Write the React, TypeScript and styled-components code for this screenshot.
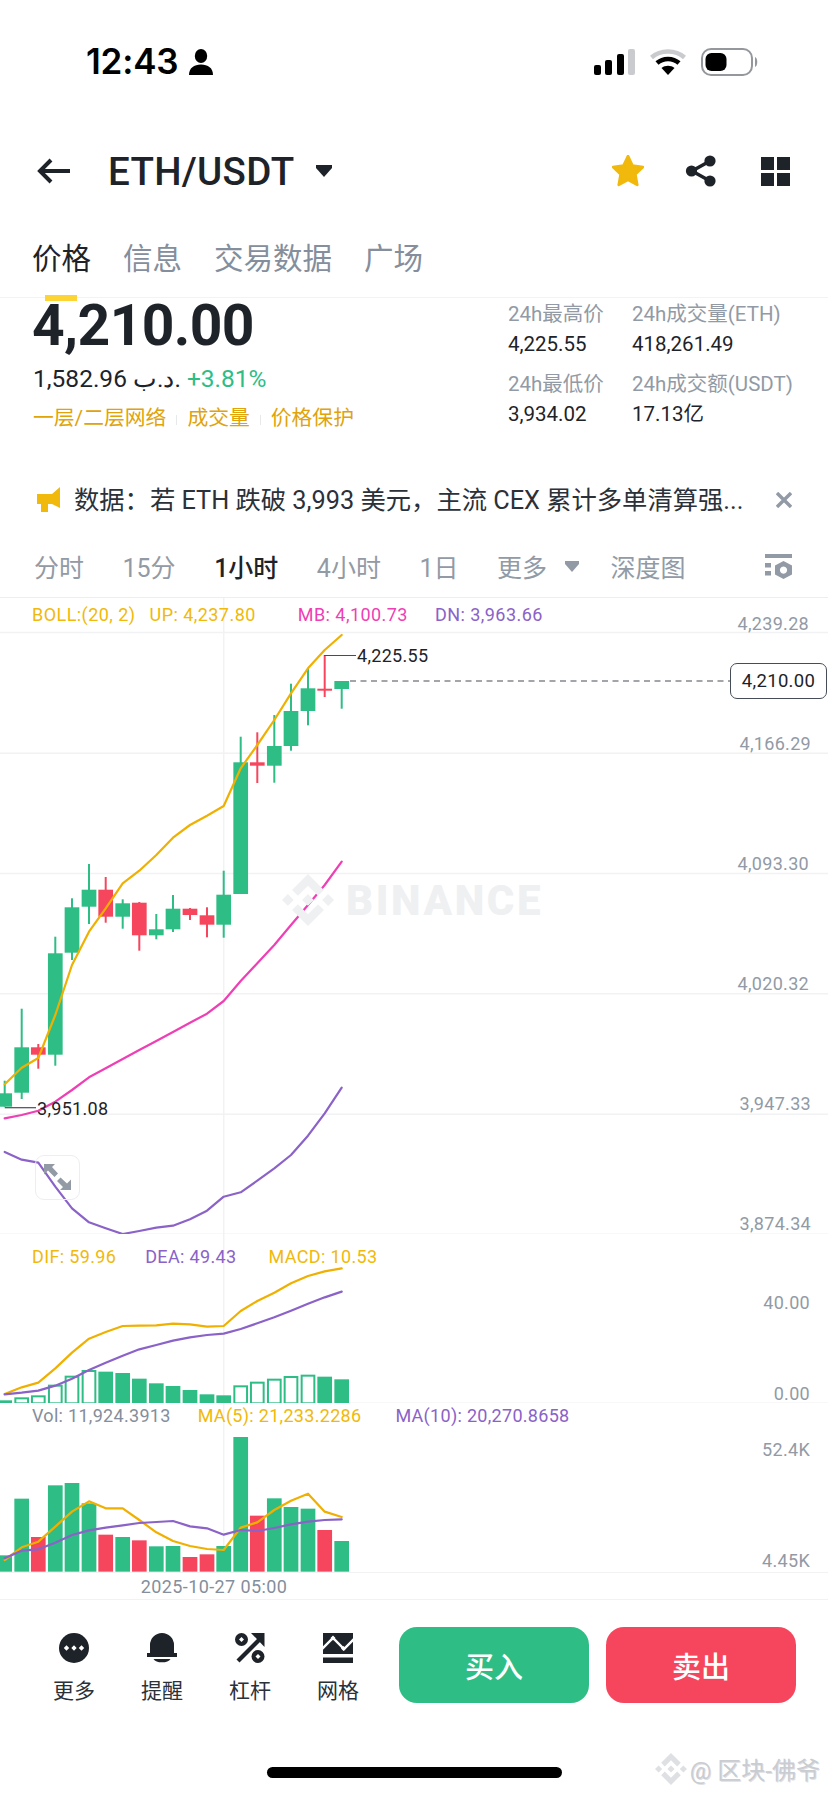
import React from 'react'
import styled, { createGlobalStyle } from 'styled-components'

const DARK = '#1e2329'
const GREY = '#929aa5'
const GREEN = '#2ebd85'
const RED = '#f6465d'
const YELLOW = '#f0b90b'
const PINK = '#ee3fb4'
const PURPLE = '#8a62c8'
const GRID = '#f1f2f4'
const FONT = `Roboto, "Noto Sans CJK SC", sans-serif`

const GlobalStyle = createGlobalStyle`
  html, body { margin: 0; padding: 0; background: #fff; }
  body { font-family: ${FONT}; color: ${DARK}; }
  * { box-sizing: border-box; }
`

const Page = styled.div`
  position: relative;
  width: 828px;
  height: 1796px;
  overflow: hidden;
  background: #fff;
`

/* status bar */
const StatusBar = styled.div`
  height: 120px;
  padding: 48px 69px 0 86px;
  display: flex;
  justify-content: space-between;
  align-items: flex-start;
`
const StatusLeft = styled.div`
  display: flex;
  align-items: center;
  gap: 11px;
`
const Time = styled.span`
  font-family: Inter, sans-serif;
  font-size: 35px;
  line-height: 27px;
  font-weight: 600;
  color: #000;
  letter-spacing: -0.2px;
`
const StatusRight = styled.div`
  display: flex;
  align-items: center;
  gap: 15px;
`

/* nav */
const NavBar = styled.div`
  height: 102px;
  padding: 0 38px 0 37px;
  display: flex;
  align-items: center;
`
const PairName = styled.span`
  margin-left: 38px;
  font-size: 38.5px;
  font-weight: 500;
  letter-spacing: 0.3px;
  color: ${DARK};
`
const PairCaret = styled.svg`
  margin-left: 20px;
  width: 18px;
  height: 14px;
`
const NavIcons = styled.div`
  margin-left: auto;
  display: flex;
  align-items: center;
  gap: 41px;
`
const GridIcon = styled.svg`
  margin-left: 3px;
  width: 29px;
  height: 29px;
`

/* tabs */
const Tabs = styled.div`
  height: 76px;
  padding: 18px 0 0 32px;
  display: flex;
  gap: 32px;
  border-bottom: 1px solid #f2f3f5;
`
const Tab = styled.div<{ $active?: boolean }>`
  position: relative;
  font-size: 29.5px;
  line-height: 38px;
  color: ${p => (p.$active ? DARK : '#848e9c')};
  ${p =>
    p.$active &&
    `&::after {
      content: '';
      position: absolute;
      left: 13px;
      top: 55px;
      width: 32px;
      height: 6px;
      background: #fcd535;
    }`}
`

/* price */
const PriceSection = styled.div`
  height: 164px;
  display: flex;
`
const PriceLeft = styled.div`
  width: 508px;
  padding-left: 33px;
`
const BigPrice = styled.div`
  font-size: 57px;
  line-height: 60px;
  font-weight: 700;
  margin-top: -2px;
  margin-left: -1px;
  color: ${DARK};
  letter-spacing: -0.6px;
`
const SubPrice = styled.div`
  margin-top: 8px;
  font-size: 24.5px;
  line-height: 30px;
  display: flex;
  gap: 6px;
  color: ${DARK};
`
const Percent = styled.span`
  color: ${GREEN};
`
const TagRow = styled.div`
  margin-top: 10px;
  display: flex;
  align-items: center;
  font-size: 20.8px;
  line-height: 28px;
  color: #e0a30a;
`
const TagDivider = styled.span`
  width: 1px;
  height: 10px;
  margin: 4px 10px 0;
  background: #e6e8ea;
`
const Stats = styled.div`
  display: grid;
  grid-template-columns: 124px auto;
  align-content: start;
  padding-top: 1px;
`
const StatCell = styled.div`
  height: 70px;
`
const StatLabel = styled.div`
  font-size: 20.5px;
  line-height: 30px;
  color: ${GREY};
`
const StatValue = styled.div`
  font-size: 20.5px;
  line-height: 30px;
  color: ${DARK};
`

/* notice */
const Notice = styled.div`
  height: 75px;
  padding: 0 36px 0 37px;
  display: flex;
  align-items: center;
`
const NoticeText = styled.span`
  margin: -3px 0 0 14px;
  font-size: 25.3px;
  white-space: nowrap;
  color: #2b3139;
`
const NoticeClose = styled.svg`
  margin-left: auto;
  width: 16px;
  height: 16px;
`

/* period row */
const PeriodRow = styled.div`
  height: 61px;
  padding: 0 35px 2px 34px;
  display: flex;
  align-items: center;
  gap: 38.5px;
  border-bottom: 1px solid #eceef0;
`
const Period = styled.span<{ $active?: boolean; $hasCaret?: boolean }>`
  font-size: 25px;
  color: ${p => (p.$active ? DARK : GREY)};
  font-weight: ${p => (p.$active ? 500 : 400)};
  display: flex;
  align-items: center;
  gap: 18px;
  margin-right: ${p => (p.$hasCaret ? -7 : 0)}px;
`
const FilterIcon = styled.svg`
  margin-left: auto;
  width: 28px;
  height: 25px;
`

/* chart */
const ChartPanel = styled.div<{ $height: number }>`
  position: relative;
  height: ${p => p.$height}px;
`
const ChartCanvas = styled.svg`
  position: absolute;
  left: 0;
  top: 0;
  width: 828px;
  height: 100%;
`
const LegendRow = styled.div<{ $top: number; $spacing: number }>`
  position: relative;
  padding: ${p => p.$top}px 0 0 32px;
  display: flex;
  font-size: 18px;
  line-height: 22px;
  letter-spacing: ${p => p.$spacing}px;
  white-space: nowrap;
`
const LegendItem = styled.span<{ $color: string; $gap?: number }>`
  color: ${p => p.$color};
  margin-left: ${p => p.$gap || 0}px;
`
const AxisLabel = styled.span<{ $top: number; $right: number }>`
  position: absolute;
  top: ${p => p.$top}px;
  right: ${p => p.$right}px;
  transform: translateY(-50%);
  font-size: 18px;
  letter-spacing: 0.3px;
  color: ${GREY};
`
const Marker = styled.span<{ $top: number; $left: number }>`
  position: absolute;
  top: ${p => p.$top}px;
  left: ${p => p.$left}px;
  transform: translateY(-50%);
  font-size: 18px;
  letter-spacing: 0.3px;
  color: ${DARK};
`
const PriceTag = styled.div`
  position: absolute;
  left: 730px;
  top: 65px;
  width: 97px;
  height: 36px;
  border: 1.5px solid #474d57;
  border-radius: 7px;
  background: #fff;
  display: flex;
  align-items: center;
  justify-content: center;
  font-size: 18.5px;
  letter-spacing: 0.3px;
  color: ${DARK};
`
const ExpandButton = styled.div`
  position: absolute;
  left: 35px;
  top: 557px;
  width: 45px;
  height: 45px;
  border: 1.5px solid #eceef2;
  border-radius: 9px;
  display: flex;
  align-items: center;
  justify-content: center;
`
const Watermark = styled.div`
  position: absolute;
  left: 282px;
  top: 276px;
  display: flex;
  align-items: center;
  gap: 12px;
  font-size: 42px;
  font-weight: 900;
  letter-spacing: 2.6px;
  color: #eff0f1;
`
const DateRow = styled.div`
  height: 28px;
  border-top: 1px solid ${GRID};
  border-bottom: 1px solid ${GRID};
  text-align: center;
  padding-right: 400px;
  font-size: 18px;
  line-height: 28px;
  letter-spacing: 0.4px;
  color: #848e9c;
`

/* toolbar */
const Toolbar = styled.div`
  height: 167px;
  padding: 27px 32px 0 30px;
  display: flex;
  align-items: flex-start;
`
const ToolItem = styled.div`
  width: 88px;
  padding-top: 6px;
  display: flex;
  flex-direction: column;
  align-items: center;
  font-size: 21px;
  line-height: 28px;
  color: #2b3139;
`
const ToolIcon = styled.svg`
  width: 30px;
  height: 30px;
  margin-bottom: 14px;
  display: block;
`
const TradeButton = styled.div<{ $color: string }>`
  width: 190px;
  height: 76px;
  margin-left: 17px;
  border-radius: 18px;
  background: ${p => p.$color};
  color: #fff;
  font-size: 29px;
  font-weight: 500;
  display: flex;
  align-items: center;
  justify-content: center;
`
const HomeIndicator = styled.div`
  width: 295px;
  height: 11px;
  margin-left: 267px;
  border-radius: 6px;
  background: #000;
`
const Credit = styled.div`
  position: absolute;
  right: 8px;
  bottom: 10px;
  display: flex;
  align-items: center;
  gap: 3px;
  font-size: 24px;
  color: #c9ccd1;
  text-shadow: 1px 1px 0 rgba(150, 150, 160, 0.3);
`

/* chart data */
const XS = [4.7, 21.7, 38.3, 55.3, 72, 89, 105.7, 122.7, 139.3, 156.3, 173, 190, 207, 223.7, 240.7, 257.3, 274.3, 291, 308, 324.7, 341.7]
const CROSS_X = 223.7
const BAR_W = 14.7

// body top, body bottom, wick top, wick bottom, colour
const CANDLES: [number, number, number, number, string][] = [
  [1093.3, 1106.7, 1080.7, 1106.7, GREEN],
  [1047.3, 1092.7, 1008.7, 1099, GREEN],
  [1047.3, 1054.7, 1044, 1068.7, RED],
  [953.3, 1054.7, 936.7, 1065.7, GREEN],
  [907.3, 952.7, 898.3, 960, GREEN],
  [889.7, 906.7, 864, 924, GREEN],
  [889.7, 916.7, 877, 922.7, RED],
  [903.3, 916.7, 899.3, 928.7, GREEN],
  [902.7, 935.3, 902, 950.7, RED],
  [929.3, 935.3, 914, 939.3, GREEN],
  [908.7, 929.3, 895, 932, GREEN],
  [908.7, 915, 908, 920, RED],
  [915.3, 924.7, 907.3, 937.3, RED],
  [894.7, 924.7, 870.7, 937.7, GREEN],
  [762.3, 894, 736.7, 894, GREEN],
  [762.3, 765.7, 732.3, 783, RED],
  [746, 765.7, 715, 782.7, GREEN],
  [711, 746, 683.7, 750.7, GREEN],
  [688.3, 711, 668.3, 725.3, GREEN],
  [688.7, 690, 655, 697, RED],
  [681, 689, 681, 708.7, GREEN],
]
const BOLL_UP = [1084.3, 1067.7, 1058, 1015, 965, 931.7, 908.3, 883.3, 870.7, 855, 837.7, 825, 815.7, 806, 768.3, 745, 720, 693.3, 668.3, 650, 635]
const BOLL_MB = [1118.3, 1115, 1110.7, 1101.7, 1090, 1077.3, 1068.3, 1059, 1050, 1041, 1032, 1022.7, 1013.7, 1001, 981, 963.3, 945, 925, 905, 885, 861.7]
const BOLL_DN = [1152, 1159.7, 1162.7, 1186.7, 1208.3, 1222.3, 1228.3, 1234, 1231, 1227.7, 1225.7, 1219.3, 1210.7, 1196.7, 1192.3, 1180.7, 1168.3, 1155, 1135.7, 1113.3, 1087.7]
const GRID_Y = [632.5, 753.3, 873.5, 993.7, 1114.3, 1234.3]

// the lower panels were read off in 3x crop units, from page y 1240
const low = (v: number) => 1240 + v / 3
const MACD_BARS = [481, 472, 466, 434, 407, 390, 395, 399, 416, 430, 438, 450, 463, 466, 436, 425, 416, 408, 404, 410, 418].map(low)
const MACD_HOLLOW = [1, 2, 3, 4, 5, 14, 15, 16, 17, 18]
const DIF = [462, 442, 428, 385, 338, 296, 276, 258, 257, 256, 251, 253, 260, 258, 213, 183, 158, 130, 108, 94, 85].map(low)
const DEA = [463, 458, 452, 437, 416, 390, 368, 347, 328, 315, 302, 292, 285, 281, 267, 250, 232, 212, 191, 172, 155].map(low)
const VOL_BARS = [946, 776, 891, 736, 729, 790, 884, 891, 901, 919, 918, 951, 943, 918, 591, 827, 775, 801, 806, 870, 903].map(low)
const VOL_RED = [2, 6, 8, 11, 12, 15, 19]
const MA5 = [960, 922, 905, 860, 815, 784, 805, 805, 840, 877, 903, 918, 927, 930, 863, 847, 810, 782, 761, 815, 831].map(low)
const MA10 = [955, 932, 928, 908, 885, 871, 863, 856, 849, 846, 843, 859, 865, 884, 870, 873, 864, 853, 845, 840, 838].map(low)
const MACD_BASE = low(490)
const VOL_BASE = low(995)

const pts = (ys: number[]) => ys.map((y, i) => `${XS[i]},${y}`).join(' ')

const Line = ({ ys, color }: { ys: number[]; color: string }) => (
  <polyline points={pts(ys)} fill="none" stroke={color} strokeWidth={2.2} strokeLinejoin="round" strokeLinecap="round" />
)

const BinanceMark = ({ size, color }: { size: number; color: string }) => (
  <svg width={size} height={size} viewBox="0 0 24 24" fill={color}>
    <path d="M16.624 13.9202l2.7175 2.7154-7.353 7.353-7.353-7.352 2.7175-2.7164 4.6355 4.6595 4.6356-4.6595zm4.6366-4.6366L24 12l-2.7154 2.7164L18.5682 12l2.6924-2.7164zm-9.272.001l2.7163 2.6914-2.7164 2.7174v-.001L9.2721 12l2.7164-2.7154zm-9.2722-.001L5.4088 12l-2.6914 2.6924L0 12l2.7164-2.7164zM11.9885.0115l7.353 7.329-2.7174 2.7154-4.6356-4.6356-4.6355 4.6595-2.7174-2.7154 7.353-7.353z" />
  </svg>
)

const MainChart = () => (
  <ChartPanel $height={636}>
    <ChartCanvas viewBox="0 598 828 636">
      {GRID_Y.map(y => (
        <line key={y} x1={0} x2={828} y1={y} y2={y} stroke={GRID} strokeWidth={1.5} />
      ))}
      <line x1={CROSS_X} x2={CROSS_X} y1={598} y2={1234} stroke={GRID} strokeWidth={1.5} />
      {CANDLES.map(([top, bottom, high, lowest, color], i) => (
        <g key={i} fill={color}>
          <rect x={XS[i] - 1} y={high} width={2} height={lowest - high} />
          <rect x={XS[i] - BAR_W / 2} y={top} width={BAR_W} height={Math.max(bottom - top, 2)} />
        </g>
      ))}
      <Line ys={BOLL_UP} color="#f0b000" />
      <Line ys={BOLL_MB} color={PINK} />
      <Line ys={BOLL_DN} color={PURPLE} />
      <line x1={350} x2={730} y1={681} y2={681} stroke="#474d57" strokeWidth={1.2} strokeDasharray="6 4.5" />
      <polyline points="324.7,656 324.7,655.5 356,655.5" fill="none" stroke="#474d57" strokeWidth={1.2} />
      <line x1={4.7} x2={36} y1={1107.7} y2={1107.7} stroke="#474d57" strokeWidth={1.2} />
    </ChartCanvas>
    <Watermark>
      <BinanceMark size={52} color="#eff0f1" />
      BINANCE
    </Watermark>
    <LegendRow $top={6} $spacing={0.45}>
      <LegendItem $color={YELLOW}>BOLL:(20, 2)</LegendItem>
      <LegendItem $color={YELLOW} $gap={14}>UP: 4,237.80</LegendItem>
      <LegendItem $color={PINK} $gap={42}>MB: 4,100.73</LegendItem>
      <LegendItem $color={PURPLE} $gap={27}>DN: 3,963.66</LegendItem>
    </LegendRow>
    <AxisLabel $top={25} $right={19}>4,239.28</AxisLabel>
    <AxisLabel $top={145} $right={17}>4,166.29</AxisLabel>
    <AxisLabel $top={265} $right={19}>4,093.30</AxisLabel>
    <AxisLabel $top={385} $right={19}>4,020.32</AxisLabel>
    <AxisLabel $top={505} $right={17}>3,947.33</AxisLabel>
    <AxisLabel $top={625} $right={17}>3,874.34</AxisLabel>
    <Marker $top={57} $left={357}>4,225.55</Marker>
    <Marker $top={510} $left={37}>3,951.08</Marker>
    <PriceTag>4,210.00</PriceTag>
    <ExpandButton>
      <svg width="28" height="27" viewBox="0 0 28 27" fill="#929aa5">
        <path d="M0 0 H11 L8 3 L14 9.5 L10.5 13 L4 6.5 L0 10.5 Z" />
        <path d="M27 26 H16 L19 23 L13 17 L16.5 13.5 L23 19.5 L27 15.5 Z" />
      </svg>
    </ExpandButton>
  </ChartPanel>
)

const MacdChart = () => (
  <ChartPanel $height={169}>
    <ChartCanvas viewBox="0 1234 828 169">
      <line x1={0} x2={828} y1={MACD_BASE} y2={MACD_BASE} stroke={GRID} strokeWidth={1.5} />
      <line x1={CROSS_X} x2={CROSS_X} y1={1234} y2={1403} stroke={GRID} strokeWidth={1.5} />
      {MACD_BARS.map((y, i) =>
        MACD_HOLLOW.includes(i) ? (
          <rect key={i} x={XS[i] - BAR_W / 2 + 1} y={y + 1} width={BAR_W - 2} height={MACD_BASE - y - 1} fill="#fff" stroke={GREEN} strokeWidth={2} />
        ) : (
          <rect key={i} x={XS[i] - BAR_W / 2} y={y} width={BAR_W} height={MACD_BASE - y} fill={GREEN} />
        ),
      )}
      <Line ys={DIF} color="#f0b000" />
      <Line ys={DEA} color={PURPLE} />
    </ChartCanvas>
    <LegendRow $top={12} $spacing={0.35}>
      <LegendItem $color={YELLOW}>DIF: 59.96</LegendItem>
      <LegendItem $color={PURPLE} $gap={29}>DEA: 49.43</LegendItem>
      <LegendItem $color={YELLOW} $gap={32}>MACD: 10.53</LegendItem>
    </LegendRow>
    <AxisLabel $top={68} $right={18}>40.00</AxisLabel>
    <AxisLabel $top={159} $right={18}>0.00</AxisLabel>
  </ChartPanel>
)

const VolumeChart = () => (
  <ChartPanel $height={169}>
    <ChartCanvas viewBox="0 1403 828 169">
      <line x1={CROSS_X} x2={CROSS_X} y1={1403} y2={1572} stroke={GRID} strokeWidth={1.5} />
      {VOL_BARS.map((y, i) => (
        <rect key={i} x={XS[i] - BAR_W / 2} y={y} width={BAR_W} height={VOL_BASE - y} fill={VOL_RED.includes(i) ? RED : GREEN} />
      ))}
      <Line ys={MA5} color="#f0b000" />
      <Line ys={MA10} color={PURPLE} />
    </ChartCanvas>
    <LegendRow $top={2} $spacing={0.3}>
      <LegendItem $color="#848e9c">Vol: 11,924.3913</LegendItem>
      <LegendItem $color={YELLOW} $gap={27}>MA(5): 21,233.2286</LegendItem>
      <LegendItem $color={PURPLE} $gap={34}>MA(10): 20,270.8658</LegendItem>
    </LegendRow>
    <AxisLabel $top={46} $right={18}>52.4K</AxisLabel>
    <AxisLabel $top={157} $right={18}>4.45K</AxisLabel>
  </ChartPanel>
)

const App = () => (
  <Page>
    <GlobalStyle />
    <StatusBar>
      <StatusLeft>
        <Time>12:43</Time>
        <svg width="24" height="26" viewBox="0 0 24 26" fill="#000">
          <ellipse cx="12" cy="7" rx="6.2" ry="7" />
          <path d="M0 26 C0 19 5 15.5 12 15.5 C19 15.5 24 19 24 26 Z" />
        </svg>
      </StatusLeft>
      <StatusRight>
        <svg width="41" height="26" viewBox="0 0 41 26">
          <rect x="0" y="16" width="7" height="10" rx="2" fill="#000" />
          <rect x="11" y="11" width="7" height="15" rx="2" fill="#000" />
          <rect x="23" y="5" width="7" height="21" rx="2" fill="#000" />
          <rect x="34" y="0" width="7" height="26" rx="2" fill="#c9cbce" />
        </svg>
        <svg width="36" height="26" viewBox="0 0 36 26" fill="none">
          <path d="M1.5 8.5 C10.5 0.5 25.5 0.5 34.5 8.5" stroke="#c9cbce" strokeWidth="4.5" />
          <path d="M7 14 C13 8.5 23 8.5 29 14" stroke="#000" strokeWidth="4.5" />
          <path d="M18 26 L11.5 19 C15 16 21 16 24.5 19 Z" fill="#000" />
        </svg>
        <svg width="58" height="28" viewBox="0 0 58 28">
          <rect x="1" y="1" width="50" height="26" rx="9" fill="#fff" stroke="#94979c" strokeWidth="2" />
          <rect x="4.5" y="5" width="21" height="18" rx="6" fill="#000" />
          <path d="M54 9 C57 10 57 18 54 19 Z" fill="#94979c" />
        </svg>
      </StatusRight>
    </StatusBar>

    <NavBar>
      <svg width="33" height="26" viewBox="0 0 33 26" fill="none" stroke={DARK} strokeWidth="4">
        <path d="M33 13 H4" />
        <path d="M14 2 L3 13 L14 24" />
      </svg>
      <PairName>ETH/USDT</PairName>
      <PairCaret viewBox="0 0 18 14" fill={DARK}>
        <path d="M1 1 H17 V4 L9 13 L1 4 Z" />
      </PairCaret>
      <NavIcons>
        <svg width="32" height="32" viewBox="1 1 30 30" fill={YELLOW} stroke={YELLOW} strokeWidth="2.5" strokeLinejoin="round">
          <path d="M16 2 L20.2 11 L30 12.3 L22.9 19 L24.7 29 L16 24.2 L7.3 29 L9.1 19 L2 12.3 L11.8 11 Z" />
        </svg>
        <svg width="32" height="32" viewBox="0 0 32 32" fill={DARK} stroke={DARK}>
          <path d="M25 6 L7 16 L25 26" fill="none" strokeWidth="3.5" />
          <circle cx="25" cy="6" r="5.6" strokeWidth="0" />
          <circle cx="6.5" cy="16" r="5.6" strokeWidth="0" />
          <circle cx="25" cy="26" r="5.6" strokeWidth="0" />
        </svg>
        <GridIcon viewBox="0 0 29 29" fill={DARK}>
          <rect x="0" y="0" width="13" height="13" />
          <rect x="16" y="0" width="13" height="13" />
          <rect x="0" y="16" width="13" height="13" />
          <rect x="16" y="16" width="13" height="13" />
        </GridIcon>
      </NavIcons>
    </NavBar>

    <Tabs>
      <Tab $active>价格</Tab>
      <Tab>信息</Tab>
      <Tab>交易数据</Tab>
      <Tab>广场</Tab>
    </Tabs>

    <PriceSection>
      <PriceLeft>
        <BigPrice>4,210.00</BigPrice>
        <SubPrice>
          <span>1,582.96 د.ب.</span>
          <Percent>+3.81%</Percent>
        </SubPrice>
        <TagRow>
          一层/二层网络
          <TagDivider />
          成交量
          <TagDivider />
          价格保护
        </TagRow>
      </PriceLeft>
      <Stats>
        <StatCell>
          <StatLabel>24h最高价</StatLabel>
          <StatValue>4,225.55</StatValue>
        </StatCell>
        <StatCell>
          <StatLabel>24h成交量(ETH)</StatLabel>
          <StatValue>418,261.49</StatValue>
        </StatCell>
        <StatCell>
          <StatLabel>24h最低价</StatLabel>
          <StatValue>3,934.02</StatValue>
        </StatCell>
        <StatCell>
          <StatLabel>24h成交额(USDT)</StatLabel>
          <StatValue>17.13亿</StatValue>
        </StatCell>
      </Stats>
    </PriceSection>

    <Notice>
      <svg width="23" height="25" viewBox="0 0 23 25" fill={YELLOW}>
        <path d="M0 7 H15 L23 0 V21 L15 17 H11 V25 H4 V17 H0 Z" />
      </svg>
      <NoticeText>数据：若 ETH 跌破 3,993 美元，主流 CEX 累计多单清算强...</NoticeText>
      <NoticeClose viewBox="0 0 16 16" stroke={GREY} strokeWidth="3.4" fill="none">
        <path d="M1 1 L15 15 M15 1 L1 15" />
      </NoticeClose>
    </Notice>

    <PeriodRow>
      <Period>分时</Period>
      <Period>15分</Period>
      <Period $active>1小时</Period>
      <Period>4小时</Period>
      <Period>1日</Period>
      <Period $hasCaret>
        更多
        <svg width="14" height="11" viewBox="0 0 14 11" fill={GREY}>
          <path d="M0 0 H14 V3 L7 11 L0 3 Z" />
        </svg>
      </Period>
      <Period>深度图</Period>
      <FilterIcon viewBox="0 0 28 25" fill={GREY}>
        <rect x="0" y="0" width="27" height="4" />
        <rect x="0" y="9" width="6" height="4.5" />
        <rect x="0" y="17" width="6" height="4.5" />
        <path fillRule="evenodd" d="M18.5 7 L27 11.5 V20.5 L18.5 25 L10 20.5 V11.5 Z M18.5 12.5 a3.6 3.6 0 1 0 0.01 0 Z" />
      </FilterIcon>
    </PeriodRow>

    <MainChart />
    <MacdChart />
    <VolumeChart />
    <DateRow>2025-10-27 05:00</DateRow>

    <Toolbar>
      <ToolItem>
        <ToolIcon viewBox="0 0 30 30">
          <circle cx="15" cy="15" r="15" fill={DARK} />
          <path d="M7.5 12.3 L10.2 15 L7.5 17.7 L4.8 15 Z M15 12.3 L17.7 15 L15 17.7 L12.3 15 Z M22.5 12.3 L25.2 15 L22.5 17.7 L19.8 15 Z" fill="#fff" />
        </ToolIcon>
        更多
      </ToolItem>
      <ToolItem>
        <ToolIcon viewBox="0 0 30 30" fill={DARK}>
          <path d="M3 20 V12 A12 12 0 0 1 27 12 V20 H30 V24 H0 V20 Z" />
          <path d="M6.5 26 H23.5 A9 5 0 0 1 6.5 26 Z" />
        </ToolIcon>
        提醒
      </ToolItem>
      <ToolItem>
        <ToolIcon viewBox="0 0 30 30">
          <path d="M3 28 L25 6" stroke={DARK} strokeWidth="4.2" fill="none" />
          <path d="M16 0 H29.5 V14 Z" fill={DARK} />
          <circle cx="6.5" cy="6.5" r="6.5" fill={DARK} />
          <path d="M6.5 4 L9 6.5 L6.5 9 L4 6.5 Z" fill="#fff" />
          <circle cx="23" cy="23.5" r="6.5" fill={DARK} />
          <path d="M23 21 L25.5 23.5 L23 26 L20.5 23.5 Z" fill="#fff" />
        </ToolIcon>
        杠杆
      </ToolItem>
      <ToolItem>
        <ToolIcon viewBox="0 0 30 30">
          <rect x="0" y="0" width="30" height="21" fill={DARK} />
          <path d="M-1 16 L10 5 L21 16 L31 6" stroke="#fff" strokeWidth="2.4" fill="none" />
          <path d="M10 2.5 L12.5 5 L10 7.5 L7.5 5 Z M20.5 13 L23 15.5 L20.5 18 L18 15.5 Z" fill="#fff" />
          <rect x="0" y="24.5" width="30" height="5.5" fill={DARK} />
        </ToolIcon>
        网格
      </ToolItem>
      <TradeButton $color={GREEN}>买入</TradeButton>
      <TradeButton $color={RED}>卖出</TradeButton>
    </Toolbar>
    <HomeIndicator />

    <Credit>
      <BinanceMark size={32} color="#dfe0e3" />
      @ 区块-佛爷
    </Credit>
  </Page>
)

export default App
